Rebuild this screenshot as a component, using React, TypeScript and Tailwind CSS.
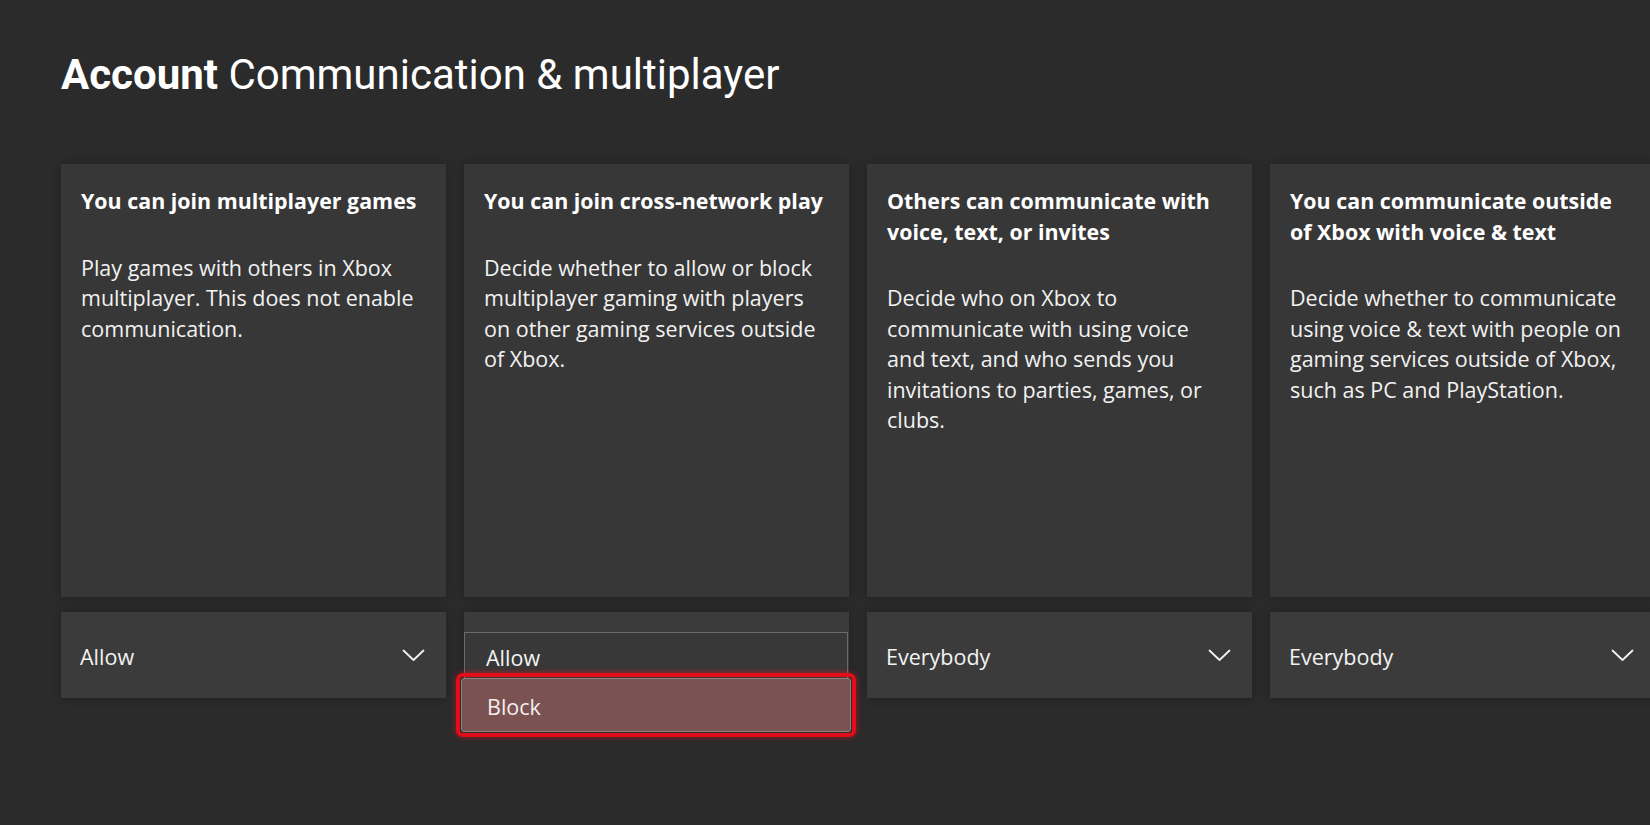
import { ReactNode } from "react";

type Setting = {
  title: string[];
  body: string[];
  value: string;
  options?: string[];
};

const settings: Setting[] = [
  {
    title: ["You can join multiplayer games"],
    body: [
      "Play games with others in Xbox",
      "multiplayer. This does not enable",
      "communication.",
    ],
    value: "Allow",
  },
  {
    title: ["You can join cross-network play"],
    body: [
      "Decide whether to allow or block",
      "multiplayer gaming with players",
      "on other gaming services outside",
      "of Xbox.",
    ],
    value: "Allow",
    options: ["Allow", "Block"],
  },
  {
    title: ["Others can communicate with", "voice, text, or invites"],
    body: [
      "Decide who on Xbox to",
      "communicate with using voice",
      "and text, and who sends you",
      "invitations to parties, games, or",
      "clubs.",
    ],
    value: "Everybody",
  },
  {
    title: ["You can communicate outside", "of Xbox with voice & text"],
    body: [
      "Decide whether to communicate",
      "using voice & text with people on",
      "gaming services outside of Xbox,",
      "such as PC and PlayStation.",
    ],
    value: "Everybody",
  },
];

function Chevron() {
  return (
    <svg width="23" height="13" viewBox="0 0 23 13" fill="none">
      <path
        d="M1.5 1.5 L11.5 11 L21.5 1.5"
        stroke="#f2f2f2"
        strokeWidth="1.8"
        strokeLinecap="round"
        strokeLinejoin="round"
      />
    </svg>
  );
}

function Lines({ lines }: { lines: string[] }) {
  return (
    <>
      {lines.map((line) => (
        <span key={line} className="block whitespace-nowrap">
          {line}
        </span>
      ))}
    </>
  );
}

function OpenList({ options }: { options: string[] }): ReactNode {
  return (
    <div className="absolute left-0 top-[20px] w-[384px]">
      {/* current value */}
      <div className="h-[47px] border border-b-0 border-[#6b6b6b] bg-[#383838] pl-[21px] pt-[4px] flex items-center text-[21.5px] text-[#f4f4f4]">
        {options[0]}
      </div>
      {/* focused option */}
      <div className="relative -ml-[8px] -mt-[6px] w-[400px] rounded-[7px] border-[4px] border-[#e30d1a] p-[1px] shadow-[0_0_6px_rgba(255,20,30,0.55)]">
        <div className="h-[54px] rounded-[3px] border border-[#9a7f7f] bg-[#7a5252] pl-[25px] pt-[4px] flex items-center text-[21.5px] text-[#f6eeee]">
          {options[1]}
        </div>
      </div>
    </div>
  );
}

function SettingColumn({ setting }: { setting: Setting }) {
  return (
    <div className="w-[385px] shrink-0 flex flex-col">
      <div className="h-[433px] bg-[#373737] pt-[22px] pl-[20px] shadow-[0_0_10px_rgba(0,0,0,0.25)]">
        <h2 className="text-[21.4px] leading-[30.5px] font-bold text-white">
          <Lines lines={setting.title} />
        </h2>
        <p className="mt-[36px] text-[21.5px] leading-[30.5px] text-[#f2f2f2]">
          <Lines lines={setting.body} />
        </p>
      </div>
      <div className="relative mt-[15px] h-[86px] bg-[#3b3b3b] shadow-[0_0_10px_rgba(0,0,0,0.25)]">
        {setting.options ? (
          <OpenList options={setting.options} />
        ) : (
          <div className="h-full flex items-center justify-between pl-[19px] pr-[21px] text-[21.5px] text-[#f2f2f2]">
            <span className="pt-[4px]">{setting.value}</span>
            <Chevron />
          </div>
        )}
      </div>
    </div>
  );
}

export default function App() {
  return (
    <div
      className="h-[825px] w-full overflow-hidden bg-[#2b2b2b]"
      style={{ fontFamily: '"Open Sans", "Noto Sans", sans-serif' }}
    >
      <div className="pl-[61px] pt-[50px]">
        {/* Header */}
        <h1
          className="text-[42px] leading-[50px] text-white whitespace-nowrap"
          style={{ fontFamily: 'Roboto, "Liberation Sans", sans-serif' }}
        >
          <span className="font-bold">Account</span>{" "}
          <span className="font-normal">Communication &amp; multiplayer</span>
        </h1>

        {/* Settings */}
        <div className="mt-[64px] flex gap-[18px]">
          {settings.map((s) => (
            <SettingColumn key={s.title.join(" ")} setting={s} />
          ))}
        </div>
      </div>
    </div>
  );
}
